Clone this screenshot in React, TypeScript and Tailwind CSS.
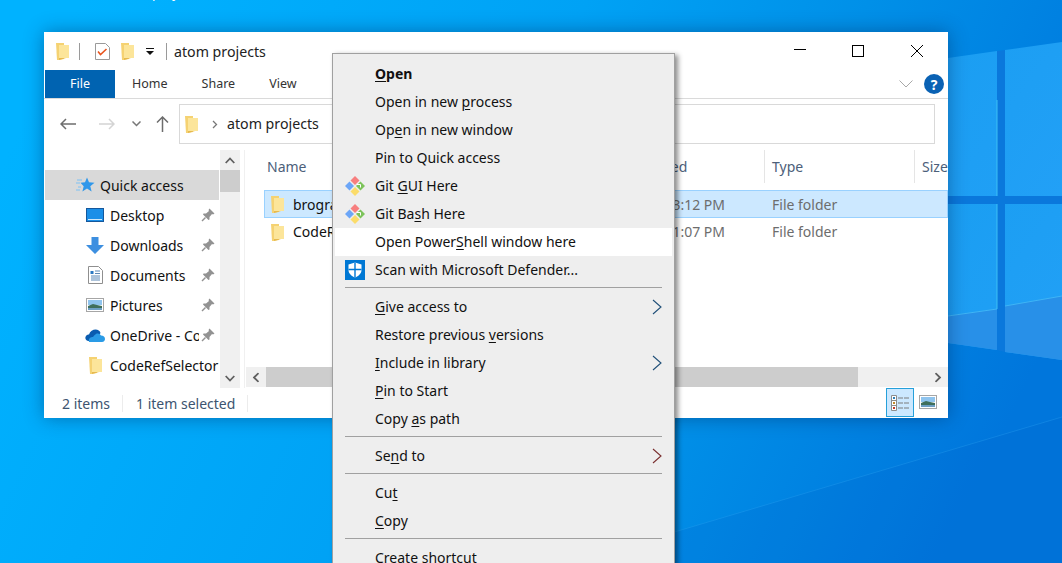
import React from 'react';

function Folder({ className = '' }: { className?: string }) {
  return (
    <svg viewBox="0 0 13 18" className={`shrink-0 ${className}`}>
      <path d="M0 1h8v16l-5 1H1z" fill="#f5d272" />
      <path d="M3 3h10v13H3z" fill="#fce59a" />
      <path d="M3 16h7l-7 2z" fill="#e6b94f" />
    </svg>
  );
}

function Landscape({ className = '' }: { className?: string }) {
  return (
    <svg viewBox="0 0 18 14" className={`shrink-0 ${className}`}>
      <rect x="0.5" y="0.5" width="17" height="13" fill="#fff" stroke="#a6a6a6" />
      <rect x="2" y="2" width="14" height="5" fill="#8fc4ee" />
      <path d="M2 8l5-2 4 1 5 1v4H2z" fill="#3f6f5c" />
      <rect x="2" y="10" width="14" height="2" fill="#6d9fc4" />
    </svg>
  );
}

function Pin() {
  return (
    <svg viewBox="0 0 14 14" className="w-[14px] h-[14px] shrink-0">
      <path d="M8.500.5l5 5-1.500 1-1-.5-2.500 3v2.500l-1 .5L2 6.500l.5-1H5L8 3l-.5-1z" fill="#929292" />
      <path d="M4.500 9.500L1 13" stroke="#929292" strokeWidth="1.500" />
    </svg>
  );
}

function GitIcon() {
  return (
    <svg viewBox="0 0 20 20" className="w-5 h-5 absolute left-[10px] top-1/2 -translate-y-1/2">
      <path d="M10 0l4.500 4.500-4.500 4.500-4.500-4.500z" fill="#f77f7f" />
      <path d="M15.500 5.500l4.500 4.500-4.500 4.500-4.500-4.500z" fill="#7cc35a" />
      <path d="M10 11l4.500 4.500-4.500 4.500-4.500-4.500z" fill="#fbdc6a" />
      <path d="M4.500 5.500L9 10l-4.500 4.500L0 10z" fill="#6ca6f7" />
      <path d="M12 8.500h3.500v3" fill="none" stroke="#fff" strokeWidth="1" />
    </svg>
  );
}

function DefenderIcon() {
  return (
    <svg viewBox="0 0 20 20" className="w-5 h-5 absolute left-[10px] top-1/2 -translate-y-1/2">
      <rect width="20" height="20" fill="#0078d4" />
      <path d="M10 2.500l6.500 2v5.500c0 3.500-3 6-6.500 7.500-3.500-1.500-6.500-4-6.500-7.500V4.500z" fill="#fff" />
      <path d="M9.300 2.500h1.400v15H9.300zM3.500 8.800h13v1.400h-13z" fill="#0078d4" />
    </svg>
  );
}

function Chevron({ stroke = '#1f5f8f' }: { stroke?: string }) {
  return (
    <svg viewBox="0 0 10 16" className="w-[10px] h-4 absolute right-[10px] top-1/2 -translate-y-1/2">
      <path d="M1 1l8 7-8 7" fill="none" stroke={stroke} strokeWidth="1.100" />
    </svg>
  );
}

type Entry = {
  parts?: [string, string, string];
  icon?: React.ReactNode;
  arrow?: string;
  bold?: boolean;
  hover?: boolean;
  sep?: boolean;
};

const entries: Entry[] = [
  { parts: ['', 'O', 'pen'], bold: true },
  { parts: ['Open in new ', 'p', 'rocess'] },
  { parts: ['Op', 'e', 'n in new window'] },
  { parts: ['Pin to Quick access', '', ''] },
  { parts: ['Git ', 'G', 'UI Here'], icon: <GitIcon /> },
  { parts: ['Git Ba', 's', 'h Here'], icon: <GitIcon /> },
  { parts: ['Open Power', 'S', 'hell window here'], hover: true },
  { parts: ['Scan with Microsoft Defender...', '', ''], icon: <DefenderIcon /> },
  { sep: true },
  { parts: ['', 'G', 'ive access to'], arrow: '#1f4f78' },
  { parts: ['Restore previous ', 'v', 'ersions'] },
  { parts: ['', 'I', 'nclude in library'], arrow: '#1f4f78' },
  { parts: ['', 'P', 'in to Start'] },
  { parts: ['Copy ', 'a', 's path'] },
  { sep: true },
  { parts: ['Se', 'n', 'd to'], arrow: '#7a2f2f' },
  { sep: true },
  { parts: ['Cu', 't', ''] },
  { parts: ['', 'C', 'opy'] },
  { sep: true },
  { parts: ['Create shortcut', '', ''] },
];

function ContextMenu() {
  return (
    <div className="absolute left-[332px] top-[53px] w-[343px] h-[530px] bg-[#eeeeee] border border-[#a0a0a0] border-b-0 shadow-[3px_2px_5px_rgba(0,0,0,0.45)] pt-[6px] px-[2px] text-[#111] text-[14px]">
      {entries.map((e, i) =>
        e.sep ? (
          <div key={i} className="h-px bg-[#a0a0a0] mt-[3px] mb-[5px] mx-[10px]" />
        ) : (
          <div
            key={i}
            className={`relative h-7 flex items-center pl-10 pb-[2px] whitespace-nowrap ${e.hover ? 'bg-white' : ''} ${e.bold ? 'font-bold' : ''}`}
          >
            {e.icon}
            <span>
              {e.parts![0]}
              {e.parts![1] && <span className="underline underline-offset-2">{e.parts![1]}</span>}
              {e.parts![2]}
            </span>
            {e.arrow && <Chevron stroke={e.arrow} />}
          </div>
        ),
      )}
    </div>
  );
}

function TitleBar() {
  return (
    <div className="h-[38px] flex items-center text-[#222]">
      <Folder className="w-[13px] h-[18px] ml-3" />
      <div className="w-px h-[17px] bg-[#9a9a9a] ml-[10px]" />
      <svg viewBox="0 0 15 17" className="w-[15px] h-[17px] ml-[15px]">
        <path d="M.5.5h10l4 4v12H.500z" fill="#fff" stroke="#9a9a9a" />
        <path d="M3 8.500l2.500 3L11.500 6" fill="none" stroke="#e8541e" strokeWidth="1.600" />
      </svg>
      <Folder className="w-[13px] h-[18px] ml-[11px]" />
      <svg viewBox="0 0 8 7" className="w-2 h-[7px] ml-[12px]">
        <path d="M0 0h8v1H0zM0 3h8L4 7z" fill="#111" />
      </svg>
      <div className="w-px h-[17px] bg-[#9a9a9a] ml-[12px]" />
      <span className="ml-[7px] pt-[2px] text-[14.2px]">atom projects</span>
      <div className="ml-auto flex items-center h-full">
        <div className="w-3 h-px bg-black mr-[46px] mb-1" />
        <div className="w-3 h-3 border border-black mr-[47px] mb-px" />
        <svg viewBox="0 0 12 12" className="w-3 h-3 mr-[25px] mb-px">
          <path d="M0 0l12 12M12 0L0 12" stroke="#000" strokeWidth="1" />
        </svg>
      </div>
    </div>
  );
}

function RibbonTabs() {
  return (
    <div className="h-[29px] flex items-stretch border-b border-[#dadada] text-[12.500px] text-[#333]">
      <div className="w-[70px] ml-px bg-[#0063b1] text-white flex items-center justify-center">File</div>
      <div className="ml-[17px] flex items-center">Home</div>
      <div className="ml-[34px] flex items-center">Share</div>
      <div className="ml-[34px] flex items-center">View</div>
      <div className="ml-auto flex items-center pr-[4px]">
        <svg viewBox="0 0 14 8" className="w-[14px] h-2 mr-[11px]">
          <path d="M.5.5L7 7 13.500.5" fill="none" stroke="#a8a8a8" />
        </svg>
        <div className="w-5 h-5 rounded-full bg-[#0a62b4] text-white font-bold text-[14px] flex items-center justify-center">?</div>
      </div>
    </div>
  );
}

function AddressRow() {
  return (
    <div className="h-[51px] flex items-center pb-px">
      <svg viewBox="0 0 16 12" className="w-4 h-3 ml-[16px]">
        <path d="M16 6H1M6 1L1 6l5 5" fill="none" stroke="#6d6d6d" strokeWidth="1.500" />
      </svg>
      <svg viewBox="0 0 16 12" className="w-4 h-3 ml-[23px]">
        <path d="M0 6h15M10 1l5 5-5 5" fill="none" stroke="#d4d4d4" strokeWidth="1.500" />
      </svg>
      <svg viewBox="0 0 9 6" className="w-[9px] h-[6px] ml-[17px]">
        <path d="M.5.5L4.500 4.500 8.500.5" fill="none" stroke="#777" strokeWidth="1.500" />
      </svg>
      <svg viewBox="0 0 13 16" className="w-[13px] h-4 ml-[15px]">
        <path d="M6.500 16V1M1 6.500l5.500-5.500L12 6.500" fill="none" stroke="#6d6d6d" strokeWidth="1.500" />
      </svg>
      <div className="ml-[10px] w-[756px] h-[40px] border border-[#d9d9d9] flex items-center text-[14.200px] text-[#222]">
        <Folder className="w-[13px] h-[18px] ml-[5px]" />
        <svg viewBox="0 0 6 9" className="w-[6px] h-[9px] ml-[14px]">
          <path d="M1 1l3.500 3.500L1 8" fill="none" stroke="#777" strokeWidth="1.300" />
        </svg>
        <span className="ml-[9px]">atom projects</span>
      </div>
    </div>
  );
}

const navItems: { label: string; icon: React.ReactNode; pin?: boolean; clip?: boolean }[] = [
  {
    label: 'Desktop',
    pin: true,
    icon: (
      <svg viewBox="0 0 18 14" className="w-[18px] h-[14px]">
        <rect x="0.5" y="0.5" width="17" height="13" fill="#1b8fe8" stroke="#15589c" />
        <rect x="2" y="11" width="14" height="1" fill="#cfe8fb" />
      </svg>
    ),
  },
  {
    label: 'Downloads',
    pin: true,
    icon: (
      <svg viewBox="0 0 18 17" className="w-[18px] h-[17px]">
        <path d="M5.500 0h7v8H18l-9 9-9-9h5.500z" fill="#3d8fe0" />
      </svg>
    ),
  },
  {
    label: 'Documents',
    pin: true,
    icon: (
      <svg viewBox="0 0 15 18" className="w-[15px] h-[18px]">
        <path d="M.5.5h10l4 4v13H.500z" fill="#fff" stroke="#8f8f8f" />
        <path d="M2.500 5h3v3h-3z" fill="#2b78c2" />
        <path d="M7 5h5M7 7.500h5M3 10h9M3 12h9M3 14h9" stroke="#5d88b5" />
      </svg>
    ),
  },
  { label: 'Pictures', pin: true, icon: <Landscape className="w-[18px] h-[14px]" /> },
  {
    label: 'OneDrive - Co',
    pin: true,
    clip: true,
    icon: (
      <svg viewBox="0 0 20 13" className="w-5 h-[13px]">
        <path d="M4 12C1 12 0 9.500 .500 8 1 6 3 5.500 4 5.500 5 2 8 .5 10.500 .5c2.500 0 4.500 1.500 5 3.500L10 12z" fill="#0a5cb0" />
        <path d="M4 13h13c2 0 3-1.500 3-3 0-2-1.500-3.500-4-3.500-1-1.500-3-2.500-5-1.500C9 6 8 8 8 8 6 8 3 9 4 13z" fill="#2a9be6" />
      </svg>
    ),
  },
  { label: 'CodeRefSelector', icon: <Folder className="w-[13px] h-[18px]" /> },
];

function ArrowBtn({ dir, className = '' }: { dir: 'up' | 'down' | 'left' | 'right'; className?: string }) {
  const rotate = { up: 'rotate-0', down: 'rotate-180', left: '-rotate-90', right: 'rotate-90' }[dir];
  return (
    <div className={`flex items-center justify-center shrink-0 ${className}`}>
      <svg viewBox="0 0 10 7" className={`w-[10px] h-[7px] ${rotate}`}>
        <path d="M.7 6L5 1.500 9.300 6" fill="none" stroke="#606060" strokeWidth="1.800" />
      </svg>
    </div>
  );
}

function NavPane() {
  return (
    <div className="w-[196px] flex text-[14px] text-[#111]">
      <div className="w-[175px] pt-5 overflow-hidden">
        <div className="h-[30px] bg-[#d9d9d9] ml-px flex items-center pl-[31px]">
          <svg viewBox="0 0 19 16" className="w-[19px] h-4 shrink-0">
            <path d="M11 .5l2 4.800 5.500.4-4.200 3.500 1.300 5.300-4.600-2.900-4.600 2.900 1.300-5.300L4.500 5.700l4.500-.4z" fill="#2f97ea" />
            <path d="M1 3h5M0 6h4M2 10h3M0 13h4" stroke="#7cc1f4" />
          </svg>
          <span className="ml-[5px]">Quick access</span>
        </div>
        {navItems.map(n => (
          <div key={n.label} className="relative h-[30px] flex items-center whitespace-nowrap">
            <div className="w-[66px] flex justify-end pr-[5px] shrink-0">
              <div className="w-5 flex justify-center">{n.icon}</div>
            </div>
            <span className={n.clip ? 'w-[89px] overflow-hidden' : ''}>{n.label}</span>
            {n.pin && (
              <div className="absolute left-[157px] top-1/2 -translate-y-1/2">
                <Pin />
              </div>
            )}
          </div>
        ))}
        <Folder className="w-[13px] h-[18px] ml-[43px] mt-[7px]" />
      </div>
      <div className="w-5 ml-px bg-[#f0f0f0] flex flex-col">
        <ArrowBtn dir="up" className="h-5" />
        <div className="h-[22px] bg-[#cdcdcd]" />
        <div className="flex-1" />
        <ArrowBtn dir="down" className="h-5" />
      </div>
    </div>
  );
}

const rows = [
  { name: 'brogramming', date: '5/14/2021 3:12 PM', selected: true },
  { name: 'CodeRefSelector', date: '4/22/2021 11:07 PM', selected: false },
];

function FileList() {
  return (
    <div className="flex-1 min-w-0 flex flex-col ml-[4px] border-l border-[#f0f0f0] pl-px">
      <div className="h-[34px] flex items-center pb-[2px] text-[14px] text-[#4c607a] relative shrink-0">
        <span className="ml-[21px]">Name</span>
        <span className="absolute left-[348px]">Date modified</span>
        <span className="absolute left-[526px]">Type</span>
        <div className="absolute left-[518px] top-0 h-[33px] w-px bg-[#e5e5e5]" />
        <div className="absolute left-[668px] top-0 h-[33px] w-px bg-[#e5e5e5]" />
        <span className="absolute left-[676px] w-[26px] overflow-hidden">Size</span>
      </div>
      <div className="flex-1 pt-[6px]">
        {rows.map(r => (
          <div
            key={r.name}
            className={`relative flex items-center text-[14px] text-[#111] ml-[18px] ${r.selected ? 'h-[28px] bg-[#cce8ff] border border-[#99d1ff]' : 'h-[27px] border border-transparent'}`}
          >
            <Folder className="w-[13px] h-[18px] ml-[6px]" />
            <span className="ml-[9px]">{r.name}</span>
            <span className="absolute right-[222px] text-[#6d6d6d] whitespace-nowrap">{r.date}</span>
            <span className="absolute left-[507px] text-[#6d6d6d]">File folder</span>
          </div>
        ))}
      </div>
      <div className="h-5 mb-px bg-[#f0f0f0] flex shrink-0">
        <ArrowBtn dir="left" className="w-[20px]" />
        <div className="w-[592px] bg-[#cdcdcd]" />
        <div className="flex-1" />
        <ArrowBtn dir="right" className="w-[20px]" />
      </div>
    </div>
  );
}

function StatusBar() {
  return (
    <div className="h-[30px] flex items-center text-[14px] text-[#3d5470] relative">
      <span className="ml-[18px]">2 items</span>
      <div className="w-px h-[17px] bg-[#ececec] ml-[12px]" />
      <span className="ml-[13px]">1 item selected</span>
      <div className="w-px h-[17px] bg-[#ececec] ml-[12px]" />
      <div className="ml-auto mr-[34px] w-7 h-[29px] mb-px bg-[#cce8ff] border border-[#26a0da] flex items-center justify-center">
        <svg viewBox="0 0 18 16" className="w-[18px] h-4">
          <path d="M.5.5h5v15h-5zM.5 5.500h5M.5 10.500h5" fill="#fff" stroke="#8c8c8c" />
          <path d="M2 2h2v2H2z" fill="#2b7fb8" />
          <path d="M2 7h2v2H2z" fill="#c18a2d" />
          <path d="M2 12h2v2H2z" fill="#c43a2a" />
          <path d="M7 3h5M13 3h5M7 8h5M13 8h5M7 13h5M13 13h5" stroke="#7d7d7d" />
        </svg>
      </div>
      <Landscape className="absolute left-[875px] top-[7px] w-[18px] h-[14px]" />
    </div>
  );
}

function Wallpaper() {
  return (
    <svg viewBox="0 0 1062 563" className="absolute inset-0 w-full h-full">
      <defs>
        <linearGradient id="wall" x1="0" y1="0.3" x2="1" y2="0.55">
          <stop offset="0" stopColor="#00b2ff" />
          <stop offset="0.45" stopColor="#00a2f5" />
          <stop offset="0.7" stopColor="#0090e8" />
          <stop offset="1" stopColor="#0076dc" />
        </linearGradient>
        <linearGradient id="pane" x1="0" y1="0" x2="1" y2="1">
          <stop offset="0" stopColor="#1a9ef2" />
          <stop offset="1" stopColor="#22a0f6" />
        </linearGradient>
      </defs>
      <rect width="1062" height="563" fill="url(#wall)" />
      <path d="M570 563L1062 417v146z" fill="#0060c8" opacity="0.16" />
      <path d="M570 563L1062 417" stroke="#30a8f5" strokeWidth="1" opacity="0.3" />
      {/* window logo on the wallpaper */}
      <path d="M997 51l8-1v302l-8-2zM948 196h114v8H948z" fill="#0a78dc" />
      <path d="M948 58l49-7v145h-49zM1005 50l57-8v154h-57z" fill="url(#pane)" />
      <path d="M948 204h49v146l-49-7zM1005 204h57v156l-57-8z" fill="url(#pane)" />
      <path d="M948 316l49-7v41l-49-7zM1005 306l57-10v64l-57-8z" fill="#2890e8" />
      <path d="M948 316l49-7M1005 306l57-10" stroke="#3fb4f5" strokeWidth="1" fill="none" />
      <path d="M997 100v96M997 204v105" stroke="#3cc0f5" strokeWidth="1" />
    </svg>
  );
}

export default function App() {
  return (
    <div
      className="relative w-[1062px] h-[563px] overflow-hidden bg-[#0090e8]"
      style={{ fontFamily: '"Noto Sans", "Open Sans", sans-serif' }}
    >
      <Wallpaper />
      <div className="absolute left-[152px] -top-[16px] text-white text-[13px] leading-[18px]">projects</div>
      <div className="absolute left-[44px] top-[32px] w-[904px] h-[386px] bg-white shadow-[0_0_18px_rgba(0,40,90,0.45)] flex flex-col">
        <TitleBar />
        <RibbonTabs />
        <AddressRow />
        <div className="flex-1 min-h-0 flex">
          <NavPane />
          <FileList />
        </div>
        <StatusBar />
      </div>
      <ContextMenu />
    </div>
  );
}
